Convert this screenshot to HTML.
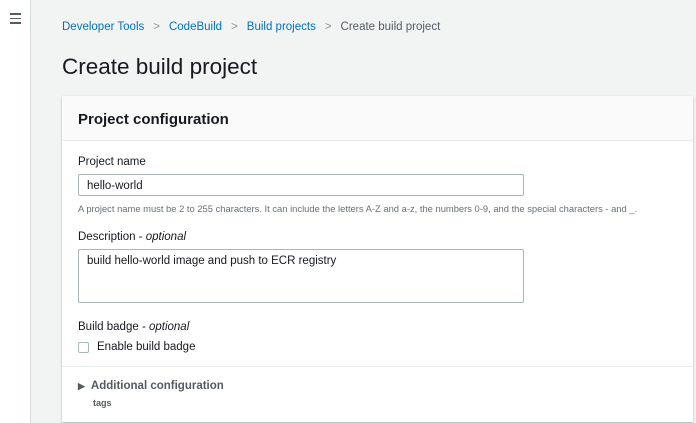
<!DOCTYPE html>
<html><head><style>
*{box-sizing:border-box;margin:0;padding:0}
body{width:696px;height:423px;overflow:hidden;background:#f2f3f3;font-family:"Liberation Sans",sans-serif;color:#16191f;position:relative}
.side{position:absolute;left:0;top:0;width:31px;height:423px;background:#fff;border-right:1px solid #d5dbdb}
.ham{position:absolute;left:10px;top:13px;width:11px}
.ham i{display:block;height:1.5px;background:#545b64;margin-bottom:3px}
.bc{position:absolute;left:62px;top:21px;font-size:11.5px;color:#0073bb}
.bc span.s{color:#879596;margin:0 9px}
.bc span.c{color:#545b64}
h1{position:absolute;left:62px;top:54px;font-size:22.5px;font-weight:normal;color:#16191f}
.card{position:absolute;left:62px;top:96px;width:631px;height:326px;background:#fff;box-shadow:0 1px 2px rgba(0,28,36,.3)}
.hd{position:absolute;left:0;top:0;width:100%;height:45px;background:#fafafa;border-bottom:1px solid #eaeded}
.hd b{position:absolute;left:16px;top:15px;font-size:15px}
.lbl{position:absolute;left:16px;font-size:11.5px}
.in{position:absolute;left:16px;width:446px;border:1px solid #aab7b8;border-radius:2px;font-size:11.5px;padding:5px 8px}
.hint{position:absolute;left:16px;top:107px;font-size:9.4px;color:#687078;white-space:nowrap}
.cb{position:absolute;left:16px;top:246px;width:11px;height:11px;border:1px solid #aab7b8;border-radius:2px}
.div{position:absolute;left:0;top:270px;width:100%;border-top:1px solid #eaeded}
</style></head><body>
<div class="side"><div class="ham"><i></i><i></i><i></i></div></div>
<div class="bc">Developer Tools<span class="s">&gt;</span>CodeBuild<span class="s">&gt;</span>Build projects<span class="s">&gt;</span><span class="c">Create build project</span></div>
<h1>Create build project</h1>
<div class="card">
<div class="hd"><b>Project configuration</b></div>
<div class="lbl" style="top:60px">Project name</div>
<div class="in" style="top:78px;height:22px">hello-world</div>
<div class="hint">A project name must be 2 to 255 characters. It can include the letters A-Z and a-z, the numbers 0-9, and the special characters - and _.</div>
<div class="lbl" style="top:135px">Description - <i>optional</i></div>
<div class="in" style="top:153px;height:54px">build hello-world image and push to ECR registry</div>
<div class="lbl" style="top:225px">Build badge - <i>optional</i></div>
<div class="cb"></div>
<div class="lbl" style="top:245px;left:35px">Enable build badge</div>
<div class="div"></div>
<div class="lbl" style="top:284px;font-weight:bold;color:#545b64"><span style="font-size:9px;margin-right:6px">&#9654;</span>Additional configuration</div>
<div class="lbl" style="top:302px;left:31px;font-size:9px;font-weight:bold;color:#545b64">tags</div>
</div>
</body></html>
